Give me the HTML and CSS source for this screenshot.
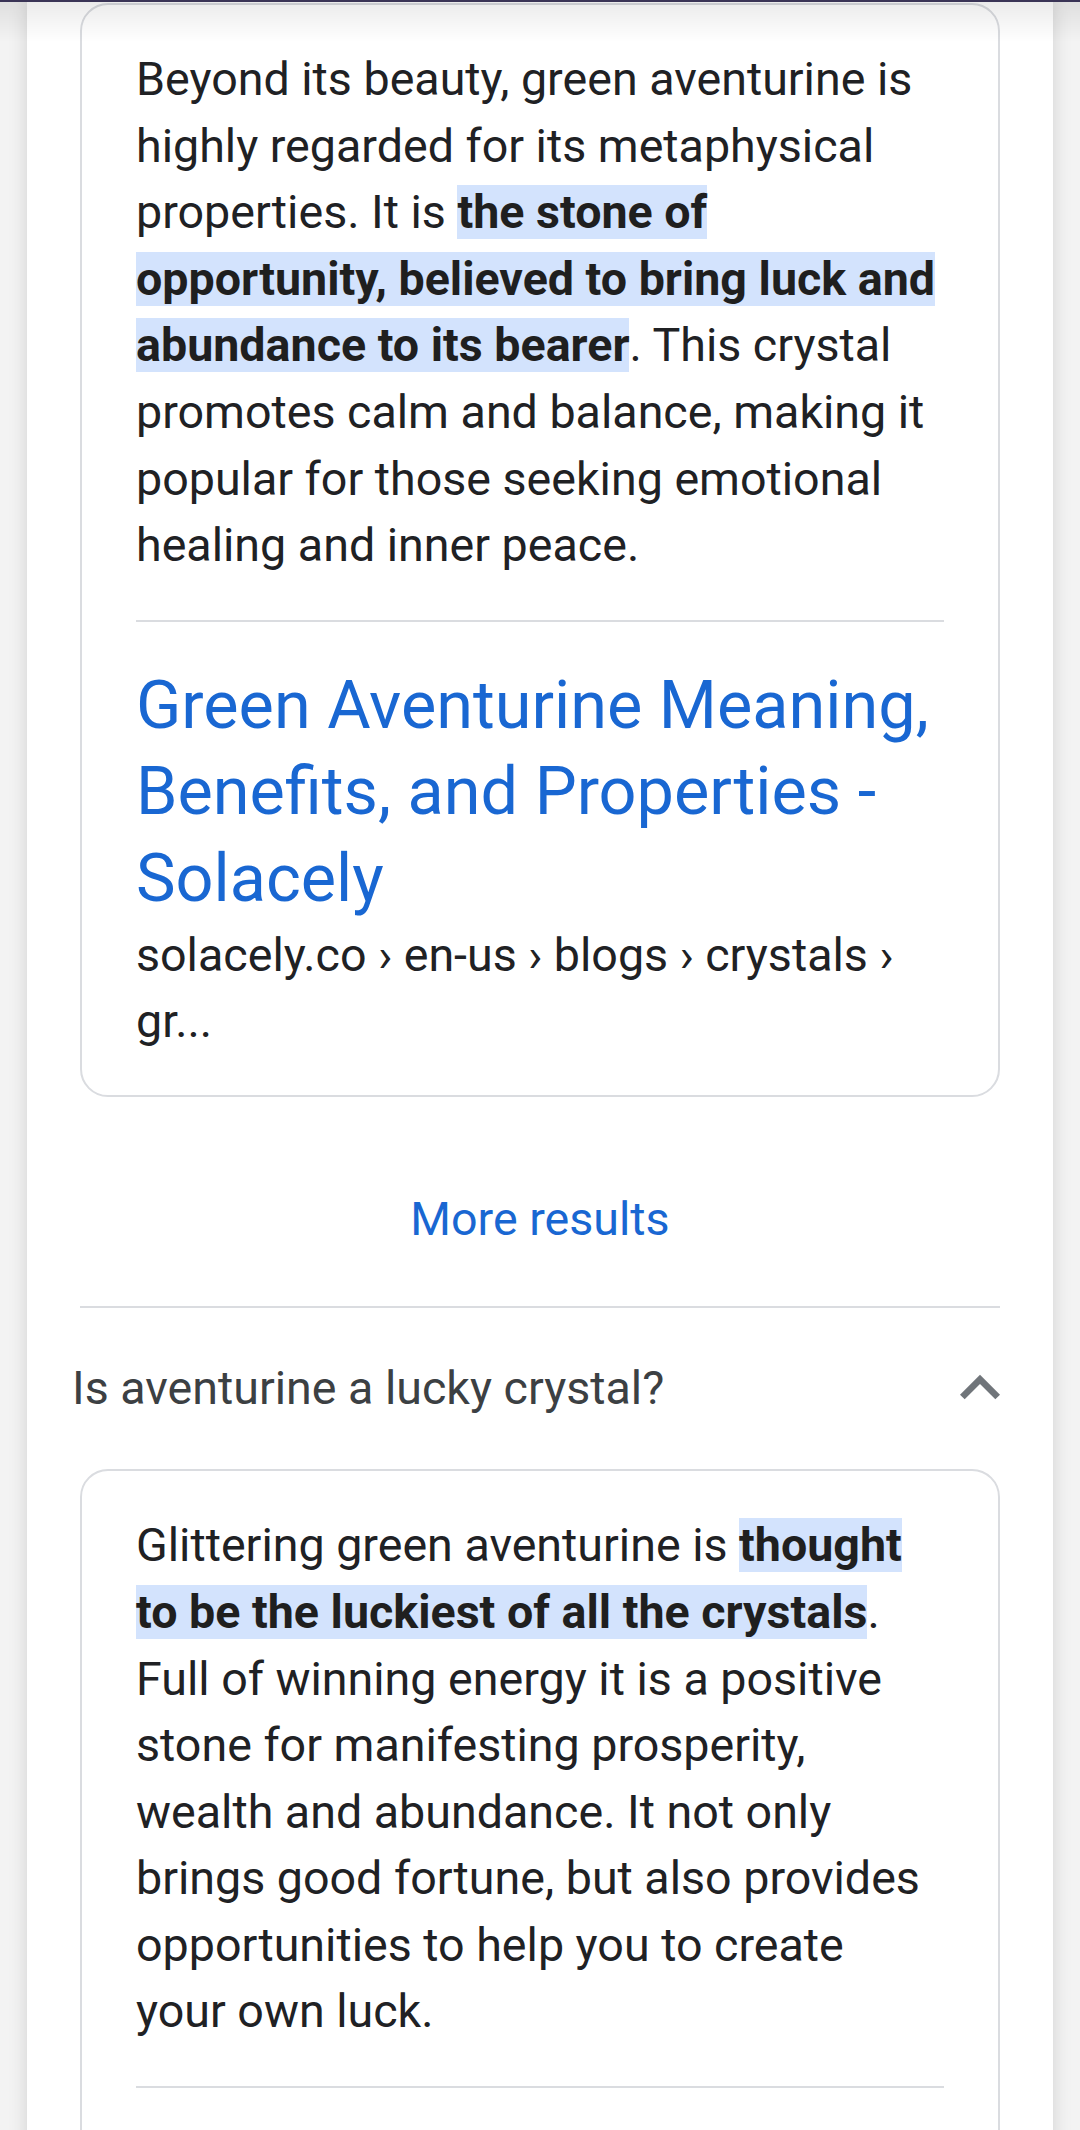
FILE: index.html
```html
<!DOCTYPE html>
<html lang="en">
<head>
  <meta charset="UTF-8">
  <meta name="viewport" content="width=device-width, initial-scale=1.0">
  <title>Is aventurine a lucky crystal?</title>
  <link rel="stylesheet" href="styles.css">
</head>
<body>
  <div class="status-edge"></div>
  <div class="top-shade"></div>

  <div class="results">
    <div class="answer">
      <p class="snippet">Beyond its beauty, green aventurine is highly regarded for its metaphysical properties. It is <b class="hl">the stone of opportunity, believed to bring luck and abundance to its bearer</b>. This crystal promotes calm and balance, making it popular for those seeking emotional healing and inner peace.</p>
      <div class="source">
        <a class="source-title" href="#">Green Aventurine Meaning, Benefits, and Properties - Solacely</a>
        <div class="source-url">solacely.co › en-us › blogs › crystals › gr...</div>
      </div>
    </div>

    <a class="more" href="#">More results</a>

    <div class="question">
      <span>Is aventurine a lucky crystal?</span>
      <svg class="chevron" viewBox="0 0 24 24"><path d="M12 8l-6 6 1.41 1.41L12 10.83l4.59 4.58L18 14z"/></svg>
    </div>

    <div class="answer">
      <p class="snippet">Glittering green aventurine is <b class="hl">thought to be the luckiest of all the crystals</b>. Full of winning energy it is a positive stone for manifesting prosperity, wealth and abundance. It not only brings good fortune, but also provides opportunities to help you to create your own luck.</p>
      <div class="source source-more"></div>
    </div>
  </div>
</body>
</html>
```

FILE: styles.css
```css
body {
  margin: 0;
  background: #f3f3f3;
  font-family: Roboto, "Noto Sans", Arial, sans-serif;
  color: #202124;
}

/* thin app bar edge + its shadow, drawn over the scrolled content */
.status-edge {
  position: fixed;
  top: 0;
  left: 0;
  right: 0;
  height: 2px;
  background: #3a3456;
  z-index: 2;
}
.top-shade {
  position: fixed;
  top: 2px;
  left: 0;
  right: 0;
  height: 40px;
  background: linear-gradient(rgba(0, 0, 0, 0.08), rgba(0, 0, 0, 0));
  z-index: 1;
  pointer-events: none;
}

.results {
  width: 1026px;
  min-height: 2130px;
  margin: 0 auto;
  padding-top: 3px;
  background: #fff;
  box-shadow: 0 0 18px rgba(0, 0, 0, 0.14);
}

.answer {
  margin: 0 53px;
  border: 2px solid #dadce0;
  border-radius: 28px;
  padding: 41px 54px 40px;
}
.snippet {
  margin: 0;
  padding-bottom: 41px;
  font-size: 46.6px;
  line-height: 66.6px;
}
.hl {
  background: #d3e3fd;
  font-weight: 700;
  color: #1f1f1f;
}

.source {
  border-top: 2px solid #dadce0;
  padding-top: 40px;
}
.source-more {
  min-height: 300px;
}
.source-title {
  display: block;
  font-size: 66.6px;
  line-height: 86.6px;
  color: #1967d2;
  text-decoration: none;
}
.source-url {
  font-size: 46.6px;
  line-height: 66.6px;
}

.more {
  display: block;
  margin: 0 53px;
  padding: 89px 0 54px;
  border-bottom: 2px solid #dadce0;
  text-align: center;
  font-size: 46.6px;
  line-height: 66.6px;
  color: #1967d2;
  text-decoration: none;
}

.question {
  display: flex;
  align-items: center;
  justify-content: space-between;
  padding: 40px 33px 41px 45px;
  font-size: 46.6px;
  line-height: 66.6px;
  color: #3c4043;
}
.chevron {
  width: 80px;
  height: 80px;
  fill: #70757a;
}
```
